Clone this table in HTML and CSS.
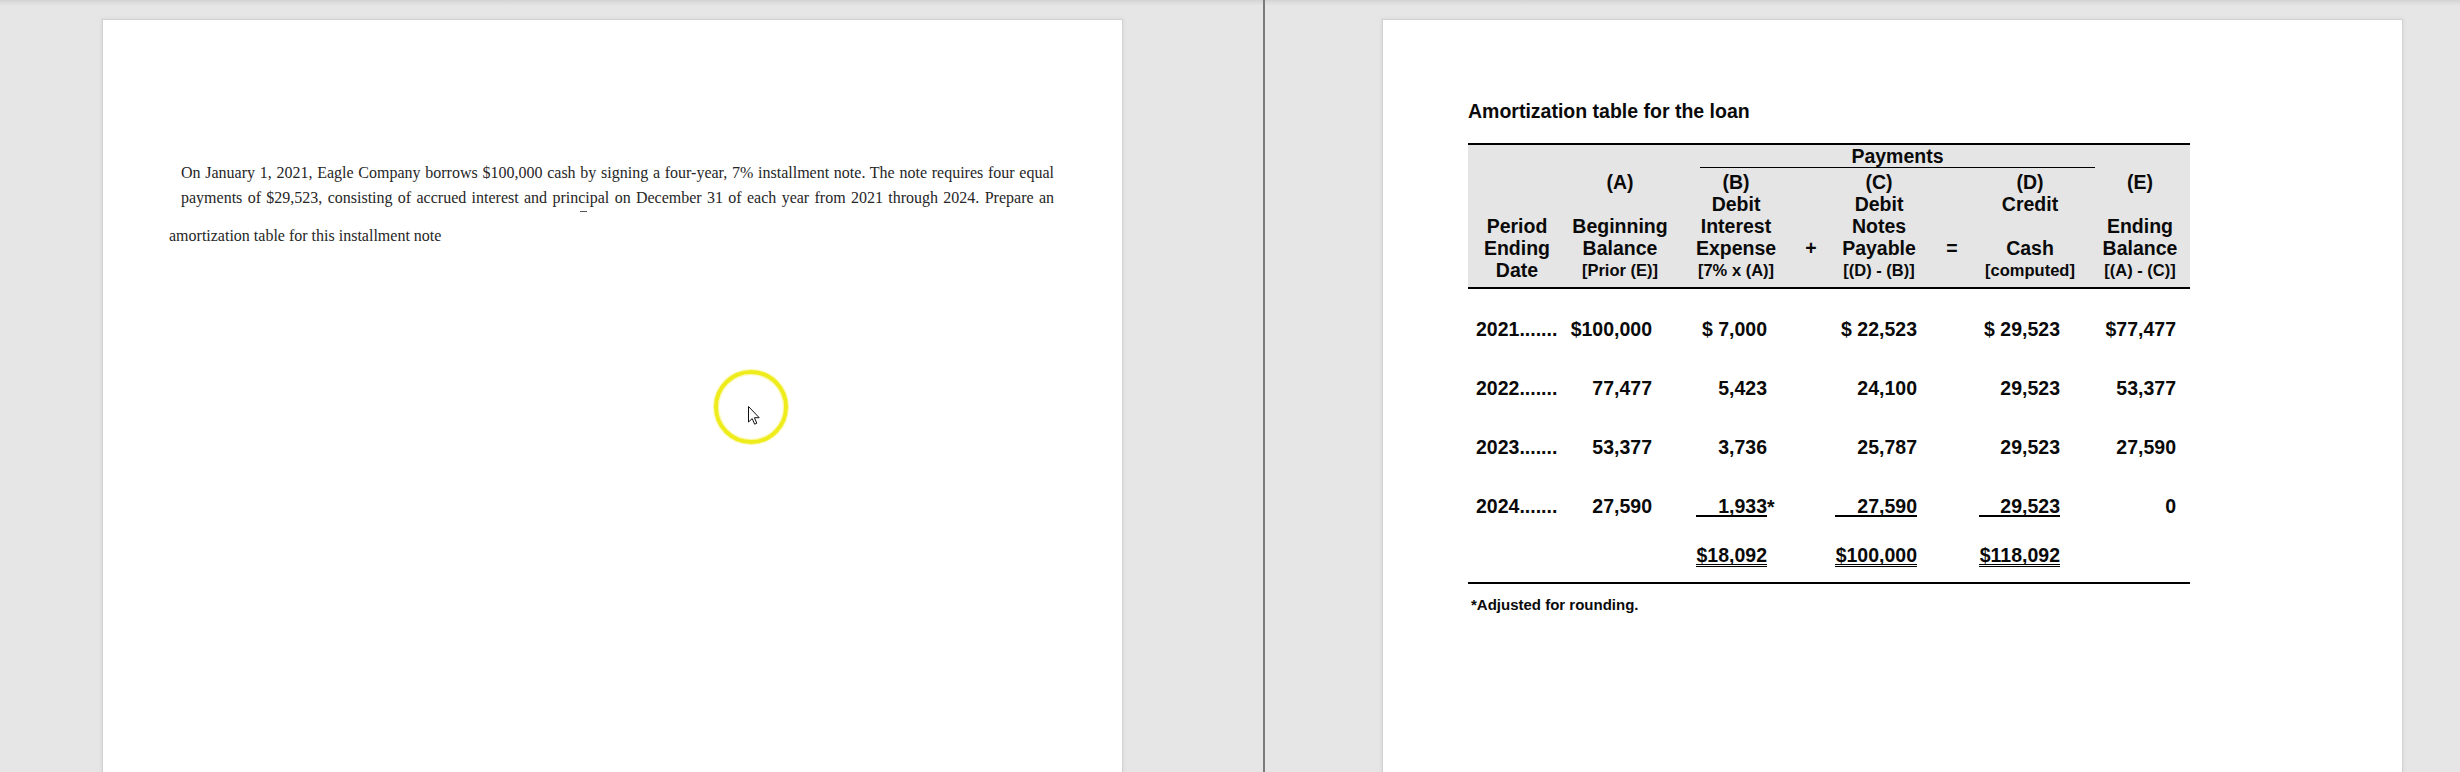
FILE: index.html
```html
<!DOCTYPE html>
<html lang="en">
<head>
<meta charset="utf-8">
<title>Amortization table</title>
<link rel="stylesheet" href="styles.css">
</head>
<body>
<div class="viewer">
  <div class="pane pane-left">
    <div class="page page-left">
      <div class="problem">
        <div class="jline">On January 1, 2021, Eagle Company borrows $100,000 cash by signing a four-year, 7% installment note. The note requires four equal</div>
        <div class="jline">payments of $29,523, consisting of accrued interest and principal on December 31 of each year from 2021 through 2024. Prepare an</div>
        <div class="tail">amortization table for this installment note</div>
      </div>
      <span class="mark"></span>
      <div class="cursor-ring"></div>
      <svg class="cursor-arrow" width="13" height="20" viewBox="0 0 13 20">
        <path d="M0.5 0.5 L0.5 16 L4.2 12.6 L6.6 18.2 L8.8 17.2 L6.4 11.7 L11.2 11.7 Z" fill="#fff" stroke="#111" stroke-width="1" stroke-linejoin="round"/>
      </svg>
    </div>
  </div>
  <div class="divider"></div>
  <div class="pane pane-right">
    <div class="page page-right">
      <div class="title">Amortization table for the loan</div>
      <div class="amort">
        <div class="thead">
          <div class="payments">Payments</div>
          <div class="hcol"><div></div><div></div><div>Period</div><div>Ending</div><div>Date</div></div>
          <div class="hcol"><div>(A)</div><div></div><div>Beginning</div><div>Balance</div><div class="sub">[Prior (E)]</div></div>
          <div class="hcol"><div>(B)</div><div>Debit</div><div>Interest</div><div>Expense</div><div class="sub">[7% x (A)]</div></div>
          <div class="hcol"><div></div><div></div><div></div><div>+</div><div></div></div>
          <div class="hcol"><div>(C)</div><div>Debit</div><div>Notes</div><div>Payable</div><div class="sub">[(D) - (B)]</div></div>
          <div class="hcol"><div></div><div></div><div></div><div>=</div><div></div></div>
          <div class="hcol"><div>(D)</div><div>Credit</div><div></div><div>Cash</div><div class="sub">[computed]</div></div>
          <div class="hcol"><div>(E)</div><div></div><div>Ending</div><div>Balance</div><div class="sub">[(A) - (C)]</div></div>
        </div>
        <div class="tbody">
          <div class="c c1">2021.......</div><div class="c c2">$100,000</div><div class="c c3">$ 7,000</div><div class="c"></div><div class="c c5">$ 22,523</div><div class="c"></div><div class="c c7">$ 29,523</div><div class="c c8">$77,477</div>
          <div class="c c1">2022.......</div><div class="c c2">77,477</div><div class="c c3">5,423</div><div class="c"></div><div class="c c5">24,100</div><div class="c"></div><div class="c c7">29,523</div><div class="c c8">53,377</div>
          <div class="c c1">2023.......</div><div class="c c2">53,377</div><div class="c c3">3,736</div><div class="c"></div><div class="c c5">25,787</div><div class="c"></div><div class="c c7">29,523</div><div class="c c8">27,590</div>
          <div class="c c1">2024.......</div><div class="c c2">27,590</div><div class="c c3"><span class="ul w-b">1,933</span><span class="ast">*</span></div><div class="c"></div><div class="c c5"><span class="ul w-c">27,590</span></div><div class="c"></div><div class="c c7"><span class="ul w-d">29,523</span></div><div class="c c8">0</div>
          <div class="c c1"></div><div class="c c2"></div><div class="c c3"><span class="dul w-b">$18,092</span></div><div class="c"></div><div class="c c5"><span class="dul w-c">$100,000</span></div><div class="c"></div><div class="c c7"><span class="dul w-d">$118,092</span></div><div class="c c8"></div>
        </div>
      </div>
      <div class="footnote">*Adjusted for rounding.</div>
    </div>
  </div>
</div>
</body>
</html>
```

FILE: styles.css
```css
* { box-sizing: border-box; }

html, body {
  margin: 0;
  padding: 0;
}

body {
  width: 2460px;
  height: 772px;
  overflow: hidden;
  background: linear-gradient(#d3d3d3 0px, #dedede 3px, #e6e6e6 6px);
}

.viewer {
  display: flex;
  height: 772px;
  overflow: hidden;
}

.pane {
  padding-top: 20px;
  height: 772px;
}

.pane-left {
  width: 1263px;
  padding-left: 103px;
}

.divider {
  width: 2px;
  height: 772px;
  background: #7b7b7b;
}

.pane-right {
  flex: 1;
  padding-left: 118px;
}

.page {
  position: relative;
  width: 1019px;
  height: 800px;
  background: #ffffff;
  box-shadow: 0 0 0 1px #d2d2d2, 0 0 3px 2px #dadada;
}

/* Left page */
.page-left {
  padding: 140px 68px 0 78px;
}

.problem {
  font-family: "Liberation Serif", "Times New Roman", serif;
  font-size: 16px;
  line-height: 25px;
  color: #262626;
}

.jline {
  text-align: justify;
  text-align-last: justify;
  white-space: nowrap;
}

.tail {
  margin-top: 13px;
  margin-left: -12px;
}

.mark {
  position: absolute;
  left: 477px;
  top: 191px;
  width: 7px;
  height: 1px;
  background: #555;
}

.cursor-ring {
  position: absolute;
  left: 611px;
  top: 350px;
  width: 74px;
  height: 74px;
  border-radius: 50%;
  border: 4px solid #efec1c;
  box-shadow: 0 0 1px 1px rgba(245, 240, 60, 0.5), inset 0 0 1px 1px rgba(245, 240, 60, 0.5);
}

.cursor-arrow {
  position: absolute;
  left: 645px;
  top: 386px;
}

/* Right page */
.page-right {
  padding: 79px 0 0 85px;
  font-family: "Liberation Sans", Arial, sans-serif;
  color: #0a0a0a;
}

.title {
  font-size: 19.5px;
  font-weight: bold;
  line-height: 24px;
}

.amort {
  width: 722px;
  margin-top: 20px;
  border-top: 2px solid #000;
  border-bottom: 2px solid #000;
  font-size: 19.5px;
  font-weight: bold;
}

.thead,
.tbody {
  display: grid;
  grid-template-columns: 98px 108px 124px 26px 110px 36px 120px 100px;
}

.thead {
  background: #e5e5e5;
  border-bottom: 2px solid #000;
  padding-bottom: 6px;
  line-height: 22px;
}

.payments {
  grid-column: 3 / 8;
  grid-row: 1;
  margin: 0 -5px 3px 26px;
  text-align: center;
  border-bottom: 1px solid #000;
}

.hcol {
  grid-row: 2;
  display: flex;
  flex-direction: column;
  text-align: center;
}

.hcol > div {
  height: 22px;
  white-space: nowrap;
}

.hcol > .sub {
  font-size: 16.5px;
}

.tbody {
  grid-template-rows: 59px 59px 59px 59px 40px;
  padding: 10px 0 7px 0;
  align-items: center;
  line-height: 22px;
}

.c {
  text-align: right;
  white-space: nowrap;
}

.c1 { text-align: left; padding-left: 8px; }
.c2 { padding-right: 22px; }
.c3 { padding-right: 31px; }
.c5 { padding-right: 17px; }
.c7 { padding-right: 30px; }
.c8 { padding-right: 14px; }

.ul,
.dul {
  display: inline-block;
  text-align: right;
  line-height: 18px;
  vertical-align: middle;
}

.ul { border-bottom: 2px solid #000; }
.dul { border-bottom: 3px double #000; }

.w-b { width: 71px; }
.w-c { width: 82px; }
.w-d { width: 81px; }

.ast {
  display: inline-block;
  width: 8px;
  margin-right: -8px;
  text-align: left;
  vertical-align: middle;
  line-height: 18px;
}

.footnote {
  margin-top: 12px;
  padding-left: 3px;
  font-size: 15px;
  font-weight: bold;
  line-height: 18px;
}
```
